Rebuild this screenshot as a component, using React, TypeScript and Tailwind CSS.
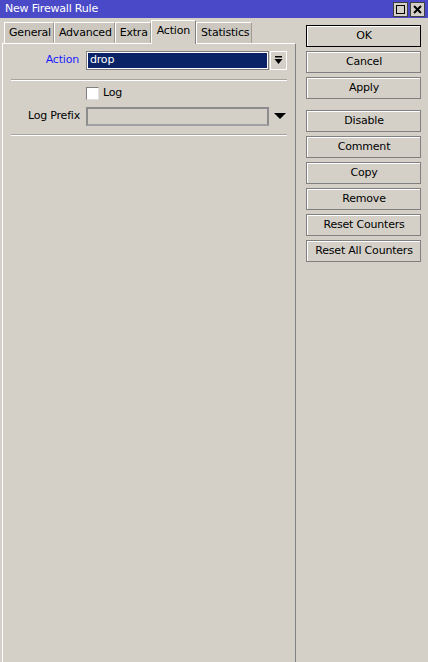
import React from "react";

const TABS = ["General", "Advanced", "Extra", "Action", "Statistics"];
const BUTTONS = ["Cancel", "Apply", "-", "Disable", "Comment", "Copy", "Remove", "Reset Counters", "Reset All Counters"];

const WinButton: React.FC<{ label: string; primary?: boolean }> = ({ label, primary }) => (
  <div className={`h-[22px] w-[115px] border ${primary ? "border-black" : "border-[#808080]"}`}>
    <div className="h-full w-full border-t border-l border-white flex items-center justify-center pb-[1px]">{label}</div>
  </div>
);

const Separator = () => (
  <div className="mx-[8px] border-t border-[#a8a49c] border-b border-b-white" />
);

const App: React.FC = () => {
  return (
    <div
      className="w-[428px] h-[662px] bg-[#d4d0c8] flex flex-col text-[11px] tracking-[-0.2px] text-black"
      style={{ fontFamily: '"DejaVu Sans", sans-serif' }}
    >
      {/* title bar */}
      <div className="h-[18px] bg-[#4a4ac8] flex items-center justify-between pl-[5px] pr-[3px]">
        <span className="text-white">New Firewall Rule</span>
        <div className="flex gap-[2px]">
          <div className="w-[15px] h-[15px] bg-[#d4d0c8] border border-[#404040] flex items-center justify-center">
            <div className="w-[9px] h-[9px] border-[1.5px] border-black" />
          </div>
          <div className="w-[15px] h-[15px] bg-[#d4d0c8] border border-[#404040] flex items-center justify-center">
            <svg width="9" height="9" viewBox="0 0 9 9">
              <path d="M1 1L8 8M8 1L1 8" stroke="black" strokeWidth="2" />
            </svg>
          </div>
        </div>
      </div>

      <div className="flex-1 flex">
        {/* left panel */}
        <div className="w-[296px] flex flex-col pl-[2px] pt-[2px]">
          <div className="flex items-end h-[23px] pl-[2px]">
            {TABS.map((t) =>
              t === "Action" ? (
                <div key={t} className="h-[24px] -mb-[1px] px-[5px] bg-[#d4d0c8] border-t border-l border-white border-r border-r-[#808080] flex items-center pb-[2px] relative z-10">
                  {t}
                </div>
              ) : (
                <div key={t} className="h-[21px] pl-[4px] pr-[2px] bg-[#ccc8c0] border-t border-l border-white border-r border-r-[#a09c94] flex items-center">
                  {t}
                </div>
              )
            )}
          </div>
          <div className="flex-1 border-t border-l border-white border-r border-r-[#808080] pt-[7px]">
            <div className="flex items-center h-[19px]">
              <div className="w-[83px] text-right pr-[7px] text-[#1a1aff]">Action</div>
              <div className="w-[183px] h-[19px] border border-[#808080] bg-white p-[1px]">
                <div className="h-full bg-[#0a2266] text-white flex items-center pl-[2px]">drop</div>
              </div>
              <div className="ml-[1px] w-[17px] h-[19px] border-t border-l border-white border-r border-b border-[#808080] flex items-center justify-center">
                <svg width="9" height="9" viewBox="0 0 9 9">
                  <rect x="1" y="0" width="7" height="1.5" fill="black" />
                  <path d="M0.5 3H8.5L4.5 8Z" fill="black" />
                </svg>
              </div>
            </div>
            <div className="mt-[9px]">
              <Separator />
            </div>
            <div className="flex items-center mt-[6px] h-[13px]">
              <div className="ml-[83px] w-[13px] h-[13px] bg-white border border-[#808080] border-r-[#e0e0e0] border-b-[#e0e0e0]" />
              <span className="ml-[4px]">Log</span>
            </div>
            <div className="flex items-center mt-[7px] h-[19px]">
              <div className="w-[83px] text-right pr-[6px]">Log Prefix</div>
              <div className="w-[183px] h-[19px] border-2 border-[#8c8c8c] border-b-[#a0a0a0]" />
              <svg className="ml-[5px]" width="12" height="7" viewBox="0 0 12 7">
                <path d="M0 0H12L6 6Z" fill="black" />
              </svg>
            </div>
            <div className="mt-[8px]">
              <Separator />
            </div>
          </div>
        </div>

        {/* right buttons */}
        <div className="flex-1 flex flex-col pl-[10px] pt-[7px] gap-[4px]">
          <WinButton label="OK" primary />
          {BUTTONS.map((b, i) =>
            b === "-" ? <div key={i} className="h-[3px]" /> : <WinButton key={b} label={b} />
          )}
        </div>
      </div>
    </div>
  );
};

export default App;
